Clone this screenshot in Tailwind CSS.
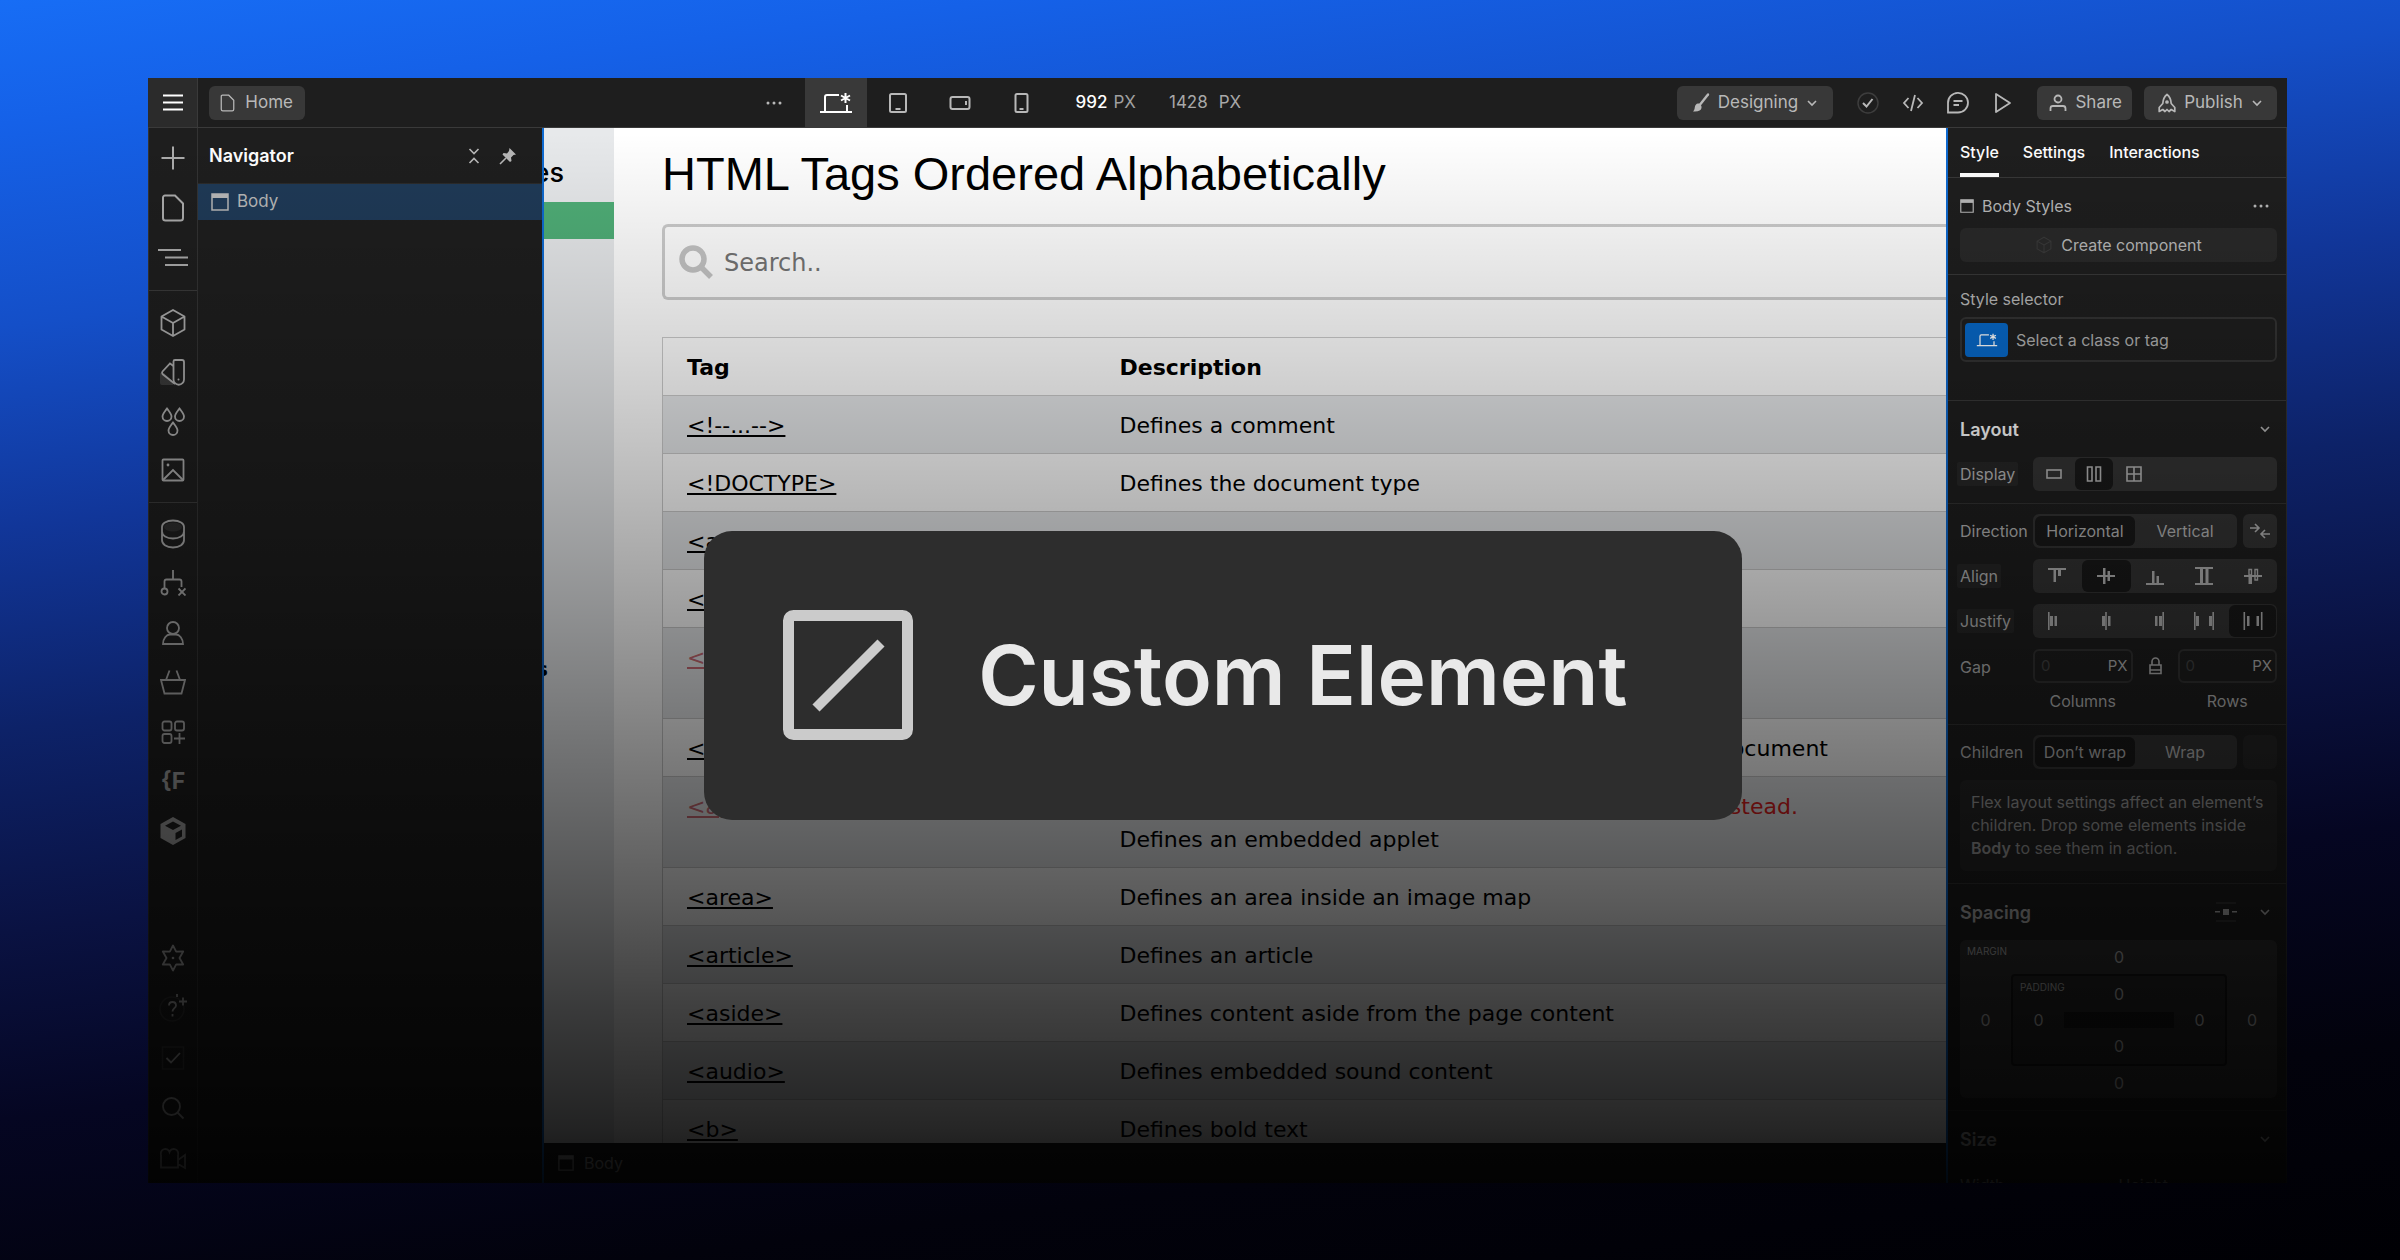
<!DOCTYPE html>
<html lang="en">
<head>
  <meta charset="utf-8">
  <title>Custom Element</title>
  <meta name="viewport" content="width=device-width, initial-scale=1">
  <script src="https://cdn.jsdelivr.net/npm/@tailwindcss/browser@4"></script>
</head>

<body class="bg-[#000004]">
  <!-- shared icons -->
  <svg class="hidden">
    <symbol id="i-page" viewBox="0 0 24 28"><path d="M4 1.500h10l8 8V24a2.500 2.500 0 0 1-2.500 2.500h-15A2.500 2.500 0 0 1 2 24V3.500a2 2 0 0 1 2-2z" fill="none" stroke="currentColor" stroke-width="2"/></symbol>
    <symbol id="i-body" viewBox="0 0 18 18"><path d="M1 1h16v16H1z" fill="none" stroke="currentColor" stroke-width="1.500"/><path d="M1 1h16v4H1z" fill="currentColor"/></symbol>
    <symbol id="i-chevron" viewBox="0 0 12 12"><path d="M2 4l4 4 4-4" fill="none" stroke="currentColor" stroke-width="1.600"/></symbol>
    <symbol id="i-laptop" viewBox="0 0 34 22"><path d="M1 20h32M6 20V5a2 2 0 0 1 2-2h12M28 13v7" fill="none" stroke="currentColor" stroke-width="2"/><path d="M26.500 1v10M22 3.500l9 5M31 3.500l-9 5" fill="none" stroke="currentColor" stroke-width="2"/></symbol>
    <symbol id="i-cube" viewBox="0 0 28 30"><path d="M14 2l11.500 6.500v13L14 28 2.500 21.500v-13zM2.500 8.500L14 15l11.500-6.500M14 15v13" fill="none" stroke="currentColor" stroke-width="1.800" stroke-linejoin="round"/></symbol>
    <symbol id="i-dots" viewBox="0 0 16 4"><circle cx="2" cy="2" r="1.500" fill="currentColor"/><circle cx="8" cy="2" r="1.500" fill="currentColor"/><circle cx="14" cy="2" r="1.500" fill="currentColor"/></symbol>
  </svg>

  <div class="flex h-screen pt-[78px] pb-[77px] pl-[148px] pr-[113px] bg-[linear-gradient(173deg,#176df5_0%,#1561e8_8%,#144fc8_21%,#113699_34%,#0d2268_47%,#0a1242_60%,#050622_72%,#02020c_86%,#000004_100%)] font-['Inter',sans-serif] text-[#b8b8b8]">
    <div class="relative flex flex-1 min-w-0 flex-col overflow-hidden bg-[#1e1e1e]">

      <header class="flex h-[50px] shrink-0 items-stretch border-b border-[#3a3a3a] text-[17px]">
        <button aria-label="Menu" class="flex w-[50px] items-center justify-center border-r border-[#3a3a3a] bg-[#2b2b2b] text-white">
          <svg class="h-5 w-[22px]" viewBox="0 0 22 20"><path d="M1 2.500h20M1 9.500h20M1 16.500h20" stroke="currentColor" stroke-width="2"/></svg>
        </button>
        <div class="flex flex-[34] items-center pl-[11px]">
          <button class="flex h-[34px] w-24 items-center justify-end gap-[10px] rounded-md bg-[#383838] pr-3">
            <svg class="h-5 w-[15px]"><use href="#i-page"/></svg>
            Home
          </button>
        </div>
        <div class="flex items-stretch">
          <button aria-label="More" class="flex w-[62px] items-center justify-center"><svg class="h-1 w-4"><use href="#i-dots"/></svg></button>
          <button aria-label="Desktop" class="flex w-[62px] items-center justify-center bg-[#393939] text-white"><svg class="h-[22px] w-[34px]"><use href="#i-laptop"/></svg></button>
          <button aria-label="Tablet" class="flex w-[62px] items-center justify-center">
            <svg class="h-[22px] w-[18px]" viewBox="0 0 18 22" fill="none" stroke="currentColor" stroke-width="2"><rect x="1" y="2" width="16" height="18" rx="1.500"/><path d="M6.500 17h5"/></svg>
          </button>
          <button aria-label="Phone landscape" class="flex w-[62px] items-center justify-center">
            <svg class="h-4 w-[22px]" viewBox="0 0 22 16" fill="none" stroke="currentColor" stroke-width="2"><rect x="1.500" y="2" width="19" height="12" rx="2"/><path d="M17 6v4"/></svg>
          </button>
          <button aria-label="Phone" class="flex w-[62px] items-center justify-center">
            <svg class="h-[22px] w-[15px]" viewBox="0 0 15 22" fill="none" stroke="currentColor" stroke-width="2"><rect x="1.500" y="2" width="12" height="18" rx="1.500"/><path d="M5.500 17h4"/></svg>
          </button>
          <p class="flex items-center gap-[6px] pl-[23px] text-[#a0a0a0]"><span class="font-medium text-white">992</span>PX</p>
          <p class="flex items-center gap-[11px] pl-[33px] text-[#a8a8a8]"><span>1428</span>PX</p>
        </div>
        <div class="flex flex-[66] items-center justify-end pr-[10px]">
          <button class="flex h-[34px] w-[156px] items-center justify-center gap-2 rounded-md bg-[#383838]">
            <svg class="h-[22px] w-[18px]" viewBox="0 0 18 22"><path d="M16 2.500L8.500 12" stroke="currentColor" stroke-width="2.400" stroke-linecap="round"/><path d="M6 11.500c2 0 4 2 3.500 4.500-.5 2.500-3 4-8.500 3.500 1.500-1 1.500-2.500 1.800-4.200.3-2 1.500-3.800 3.200-3.800z" fill="currentColor"/></svg>
            Designing
            <svg class="h-3 w-3"><use href="#i-chevron"/></svg>
          </button>
          <div class="mx-3 flex">
            <button aria-label="Status" class="flex w-[45px] justify-center">
              <svg class="size-6" viewBox="0 0 24 24" fill="none"><circle cx="12" cy="12" r="10" stroke="#3d3d3d" stroke-width="1.500"/><path d="M7 12l3.500 3.500L16.500 8" stroke="currentColor" stroke-width="2"/></svg>
            </button>
            <button aria-label="Code" class="flex w-[45px] justify-center">
              <svg class="size-6" viewBox="0 0 24 24" fill="none" stroke="currentColor" stroke-width="1.800"><path d="M7.500 7l-4.500 5 4.500 5M16.500 7l4.500 5-4.500 5M14 4l-4 16"/></svg>
            </button>
            <button aria-label="Comments" class="flex w-[45px] justify-center">
              <svg class="size-6" viewBox="0 0 24 24" fill="none" stroke="currentColor" stroke-width="1.800"><path d="M2 21.500V12A10 9.800 0 1 1 12 21.500zM7.500 10h9M7.500 14h5.500"/></svg>
            </button>
            <button aria-label="Preview" class="flex w-[45px] justify-center">
              <svg class="size-6" viewBox="0 0 24 24" fill="none" stroke="currentColor" stroke-width="1.800"><path d="M5 3v18l14-9z" stroke-linejoin="round"/></svg>
            </button>
          </div>
          <button class="mr-3 flex h-[34px] w-[95px] items-center justify-end gap-2 rounded-md bg-[#383838] pr-[10px]">
            <svg class="h-5 w-[18px]" viewBox="0 0 18 20" fill="none" stroke="currentColor" stroke-width="1.800"><circle cx="9" cy="6" r="3.500"/><path d="M1.500 18v-2.500a2.500 2.500 0 0 1 2.500-2.500h10a2.500 2.500 0 0 1 2.500 2.500V18"/></svg>
            Share
          </button>
          <button class="flex h-[34px] w-[133px] items-center justify-center gap-2 rounded-md bg-[#383838]">
            <svg class="h-5 w-[18px]" viewBox="0 0 18 20" fill="none" stroke="currentColor" stroke-width="1.700" stroke-linejoin="round"><path d="M9 1.500C6.500 3.500 5 6.500 4.800 10.500L1.200 14.500v4l3.600-2 2.200 2 2-2 2 2 2.200-2 3.600 2v-4l-3.600-4C13 6.500 11.500 3.500 9 1.500z"/><circle cx="9" cy="9" r="1" fill="currentColor"/></svg>
            Publish
            <svg class="h-3 w-3"><use href="#i-chevron"/></svg>
          </button>
        </div>
      </header>

      <div class="flex min-h-0 flex-1">
        <!-- tool rail -->
        <nav class="flex w-[50px] shrink-0 flex-col border-x border-[#333] text-[#acacac]">
          <div class="flex flex-col border-b border-[#3a3a3a] pt-[5px] pb-[7px]">
            <button aria-label="Add" class="flex h-[50px] items-center justify-center"><svg class="size-6" viewBox="0 0 24 24"><path d="M12 .500v23M.500 12h23" stroke="currentColor" stroke-width="2"/></svg></button>
            <button aria-label="Pages" class="flex h-[50px] items-center justify-center"><svg class="h-[28px] w-6"><use href="#i-page"/></svg></button>
            <button aria-label="Navigator" class="flex h-[50px] items-center justify-center"><svg class="h-5 w-[30px]" viewBox="0 0 30 20"><path d="M0 2h23M7 9.500h23M7 17h23" stroke="currentColor" stroke-width="2"/></svg></button>
          </div>
          <div class="flex flex-col border-b border-[#3a3a3a] pt-[7px] pb-2">
            <button aria-label="Components" class="flex h-[49px] items-center justify-center"><svg class="h-[30px] w-[28px]"><use href="#i-cube"/></svg></button>
            <button aria-label="Variables" class="flex h-[49px] items-center justify-center">
              <svg class="h-[28px] w-[26px]" viewBox="0 0 26 28" fill="none" stroke="currentColor" stroke-width="1.800"><path d="M0 15h4l9 9v3H2a2 2 0 0 1-2-2z" fill="#3a3a3a" stroke="none"/><path d="M15 2h7a2 2 0 0 1 2 2v17.500a5.200 5.200 0 0 1-10.500 0V3.500A1.500 1.500 0 0 1 15 2z"/><path d="M13.500 8L10 5.500 2.500 13.500a2 2 0 0 0 0 2.500l12.500 10"/><circle cx="18.500" cy="21.500" r="1" fill="currentColor" stroke="none"/></svg>
            </button>
            <button aria-label="Styles" class="flex h-[49px] items-center justify-center">
              <svg class="h-[30px] w-[26px]" viewBox="0 0 26 30" fill="none" stroke="currentColor" stroke-width="1.800"><path d="M7 2.500C4.500 6 2.500 8 2.500 10.500a4.500 4.500 0 0 0 9 0C11.500 8 9.500 6 7 2.500zM19.500 2.500C17 6 15 8 15 10.500a4.500 4.500 0 0 0 9 0c0-2.500-2-4.500-4.500-8zM13 16.500c-2.500 3.500-4.500 5.500-4.500 8a4.500 4.500 0 0 0 9 0c0-2.500-2-4.500-4.500-8z"/></svg>
            </button>
            <button aria-label="Assets" class="flex h-[49px] items-center justify-center">
              <svg class="size-6" viewBox="0 0 24 24" fill="none" stroke="currentColor" stroke-width="1.800"><rect x="1.500" y="1.500" width="21" height="21" rx="1"/><path d="M2 22l10-10 10 10"/><circle cx="7" cy="7" r="1.400" fill="currentColor" stroke="none"/></svg>
            </button>
          </div>
          <div class="grid h-[353px] auto-rows-fr pt-[6px]">
            <button aria-label="CMS" class="flex items-center justify-center">
              <svg class="h-[30px] w-6" viewBox="0 0 24 30" fill="none" stroke="currentColor" stroke-width="1.800"><ellipse cx="12" cy="8" rx="9" ry="4.500" fill="#303030" stroke="none"/><path d="M1 8c0-3.500 4-6.500 11-6.500S23 4.500 23 8v13c0 4-4 7.500-11 7.500S1 25 1 21zM1 12.500c0 4 4.500 7 11 7s11-3 11-7"/></svg>
            </button>
            <button aria-label="Logic" class="flex items-center justify-center">
              <svg class="h-[26px] w-[26px]" viewBox="0 0 26 26" fill="none" stroke="currentColor" stroke-width="1.800"><path d="M13 0v9.500M4.500 18v-6.500a2 2 0 0 1 2-2h13a2 2 0 0 1 2 2V17M18.500 18.500l7 7M25.500 18.500l-7 7"/><circle cx="4.500" cy="21.500" r="3"/></svg>
            </button>
            <button aria-label="Users" class="flex items-center justify-center">
              <svg class="h-[26px] w-6" viewBox="0 0 24 26" fill="none" stroke="currentColor" stroke-width="1.800"><circle cx="12" cy="8" r="6"/><path d="M2 24c0-5.500 3.500-9.500 7-9.500h6c3.500 0 7 4 7 9.500z"/></svg>
            </button>
            <button aria-label="Ecommerce" class="flex items-center justify-center">
              <svg class="h-[26px] w-[26px]" viewBox="0 0 26 26" fill="none" stroke="currentColor" stroke-width="1.800"><path d="M1 11h24l-3.500 13.500h-17zM6 11l3.500-9.500M20 11l-3.500-9.500"/></svg>
            </button>
            <button aria-label="Apps" class="flex items-center justify-center">
              <svg class="size-6" viewBox="0 0 24 24" fill="none" stroke="currentColor" stroke-width="1.800"><rect x="1.500" y="1.500" width="9" height="9" rx="2"/><rect x="14" y="1.500" width="9" height="9" rx="2"/><rect x="1.500" y="14" width="9" height="9" rx="2"/><path d="M18.500 13v11M13 18.500h11"/></svg>
            </button>
            <button aria-label="Finsweet" class="flex items-center justify-center text-[23px] font-bold text-[#a0a0a0]">{F</button>
            <button aria-label="Box app" class="flex items-center justify-center text-[#a0a0a0]">
              <svg class="h-[30px] w-[26px]" viewBox="0 0 26 30"><path d="M13 1l12.500 7v14L13 29 .500 22V8z" fill="currentColor"/><path d="M13 5.500l8 4.300-8 4.200-8-4.200zM15.500 17l6.500-3.500v7L15.500 24z" fill="#1e1e1e"/></svg>
            </button>
          </div>
          <div class="mt-auto flex flex-col">
            <button aria-label="Settings" class="flex h-[50px] items-center justify-center">
              <svg class="h-[28px] w-6" viewBox="0 0 24 28" fill="none" stroke="currentColor" stroke-width="1.800" stroke-linejoin="round"><path d="M12 1.500l3.200 6.200 7-.200-3.700 6.500 3.700 6.500-7-.200L12 26.500l-3.200-6.200-7 .200L5.500 14 1.800 7.500l7 .200z"/><circle cx="12" cy="14" r="1.300" fill="currentColor" stroke="none"/></svg>
            </button>
            <button aria-label="Help" class="flex h-[50px] items-center justify-center">
              <svg class="h-[28px] w-[28px]" viewBox="0 0 28 28" fill="none" stroke="currentColor" stroke-width="1.800"><circle cx="13" cy="15" r="12" stroke="#333" stroke-width="1.500"/><path d="M10 11.500c0-2 1.500-3.500 3.500-3.500s3.500 1.500 3.500 3.500c0 2.500-3.500 3-3.500 6M13.500 20v2.500M20 7.500h8M24 3.500v8M18 0v3"/></svg>
            </button>
            <button aria-label="Audit" class="flex h-[50px] items-center justify-center">
              <svg class="size-6" viewBox="0 0 24 24" fill="none"><rect x="1.500" y="1" width="21" height="22" stroke="#3a3a3a" stroke-width="1.500"/><path d="M5.500 12l4.500 4.500L19 7" stroke="currentColor" stroke-width="1.800"/></svg>
            </button>
            <button aria-label="Search" class="flex h-[50px] items-center justify-center">
              <svg class="size-6" viewBox="0 0 24 24" fill="none" stroke="currentColor" stroke-width="1.800"><circle cx="10.500" cy="10.500" r="8.500"/><path d="M16.500 16.500l6 6"/></svg>
            </button>
            <button aria-label="Tutorials" class="flex h-[50px] items-center justify-center">
              <svg class="h-6 w-[28px]" viewBox="0 0 28 24" fill="none" stroke="currentColor" stroke-width="1.800"><path d="M2 9v12.500h17V9M19 14l7-5v13l-7-4M2 9a3.800 3.800 0 1 1 8.500-3 3.800 3.800 0 1 1 8.500 3"/></svg>
            </button>
          </div>
        </nav>

        <!-- navigator -->
        <section class="flex w-[346px] shrink-0 flex-col border-r-2 border-[#0f6ad0]">
          <div class="flex h-14 items-center border-b border-[#2b2b2b] pl-[11px] pr-[25px]">
            <h2 class="flex-1 text-[18px] font-semibold text-white">Navigator</h2>
            <button aria-label="Collapse all" class="mr-[19px]"><svg class="h-4 w-3" viewBox="0 0 12 16" fill="none" stroke="currentColor" stroke-width="1.600"><path d="M1.500 1L6 5.500 10.500 1M1.500 15L6 10.500 10.500 15"/></svg></button>
            <button aria-label="Pin"><svg class="h-[18px] w-[18px]" viewBox="0 0 18 18"><path d="M10.500 1l6.500 6.500-2.500.500-2.500 2.500.500 3.500-1.500 1L3.500 7.500l1-1.500 3.500.500L10 4z" fill="currentColor"/><path d="M7 11l-6 6" stroke="currentColor" stroke-width="1.600"/></svg></button>
          </div>
          <button class="flex h-9 items-center gap-2 bg-[#1f3a57] pl-[13px] text-[17px]">
            <svg class="size-[18px]"><use href="#i-body"/></svg>
            Body
          </button>
        </section>

        <!-- page being edited -->
        <div class="flex min-w-0 flex-1 flex-col">
          <main class="flex min-h-0 flex-1 overflow-hidden bg-white font-['Verdana','DejaVu_Sans',sans-serif] text-[22px] text-black">
            <aside class="w-[70px] shrink-0 bg-[#e7e9eb]">
              <p class="flex h-[74px] w-5 items-center justify-end overflow-hidden pt-4 font-['Inter',sans-serif] text-[27px] font-medium">References</p>
              <div class="h-[37px] bg-[#4fae77]"></div>
              <p class="mt-[415px] flex w-1 justify-end overflow-hidden text-[20px] font-bold">Tags</p>
            </aside>
            <div class="min-w-0 flex-1 pl-12">
              <h1 class="whitespace-nowrap pt-4 font-['Liberation_Sans',sans-serif] text-[47px] leading-[60px]">HTML Tags Ordered Alphabetically</h1>
              <label class="mt-5 flex h-[76px] items-center gap-[11px] rounded-l-md border-[3px] border-r-0 border-[#ccc] pl-[14px]">
                <svg class="h-[34px] w-[34px]" viewBox="0 0 34 34" fill="none" stroke="#c4c4c4" stroke-width="5.500"><circle cx="14" cy="14" r="11"/><path d="M22 22l10 10"/></svg>
                <input type="text" aria-label="Search tags" placeholder="Search.." class="flex-1 pt-[2px] text-[24px] outline-none placeholder:text-[#757575]">
              </label>
              <table class="mt-[37px] w-full border-collapse border-l border-t border-[#ccc] text-left leading-[33px]">
                <thead>
                  <tr class="border-b border-[#ccc]"><th class="w-[433px] pt-[13px] pb-[11px] pl-6">Tag</th><th class="pt-[13px] pb-[11px] pl-6">Description</th></tr>
                </thead>
                <tbody class="align-top whitespace-nowrap">
                  <tr class="border-b border-[#ccc] bg-[#e7e9eb]"><td class="pt-[13px] pb-[11px] pl-6"><a href="#" class="underline">&lt;!--...--&gt;</a></td><td class="pt-[13px] pb-[11px] pl-6">Defines a comment</td></tr>
                  <tr class="border-b border-[#ccc]"><td class="pt-[13px] pb-[11px] pl-6"><a href="#" class="underline">&lt;!DOCTYPE&gt;</a></td><td class="pt-[13px] pb-[11px] pl-6">Defines the document type</td></tr>
                  <tr class="border-b border-[#ccc] bg-[#e7e9eb]"><td class="pt-[13px] pb-[11px] pl-6"><a href="#" class="underline">&lt;a&gt;</a></td><td class="pt-[13px] pb-[11px] pl-6">Defines a hyperlink</td></tr>
                  <tr class="border-b border-[#ccc]"><td class="pt-[13px] pb-[11px] pl-6"><a href="#" class="underline">&lt;abbr&gt;</a></td><td class="pt-[13px] pb-[11px] pl-6">Defines an abbreviation or an acronym</td></tr>
                  <tr class="border-b border-[#ccc] bg-[#e7e9eb]"><td class="pt-[13px] pb-[11px] pl-6"><a href="#" class="text-[#c96a74] underline">&lt;acronym&gt;</a></td><td class="pt-[13px] pb-[11px] pl-6"><span class="text-[#e02020]">Not supported in HTML5. Use &lt;abbr&gt; instead.</span><br>Defines an acronym</td></tr>
                  <tr class="border-b border-[#ccc]"><td class="pt-[13px] pb-[11px] pl-6"><a href="#" class="underline">&lt;address&gt;</a></td><td class="pt-[13px] pb-[11px] pl-6">Defines contact information for the author/owner of a document</td></tr>
                  <tr class="border-b border-[#ccc] bg-[#e7e9eb]"><td class="pt-[13px] pb-[11px] pl-6"><a href="#" class="text-[#c96a74] underline">&lt;applet&gt;</a></td><td class="pt-[13px] pb-[11px] pl-6"><span class="text-[#e02020]">Not supported in HTML5. Use &lt;embed&gt; or &lt;object&gt; instead.</span><br>Defines an embedded applet</td></tr>
                  <tr class="border-b border-[#ccc]"><td class="pt-[13px] pb-[11px] pl-6"><a href="#" class="underline">&lt;area&gt;</a></td><td class="pt-[13px] pb-[11px] pl-6">Defines an area inside an image map</td></tr>
                  <tr class="border-b border-[#ccc] bg-[#e7e9eb]"><td class="pt-[13px] pb-[11px] pl-6"><a href="#" class="underline">&lt;article&gt;</a></td><td class="pt-[13px] pb-[11px] pl-6">Defines an article</td></tr>
                  <tr class="border-b border-[#ccc]"><td class="pt-[13px] pb-[11px] pl-6"><a href="#" class="underline">&lt;aside&gt;</a></td><td class="pt-[13px] pb-[11px] pl-6">Defines content aside from the page content</td></tr>
                  <tr class="border-b border-[#ccc] bg-[#e7e9eb]"><td class="pt-[13px] pb-[11px] pl-6"><a href="#" class="underline">&lt;audio&gt;</a></td><td class="pt-[13px] pb-[11px] pl-6">Defines embedded sound content</td></tr>
                  <tr><td class="pt-[13px] pb-[11px] pl-6"><a href="#" class="underline">&lt;b&gt;</a></td><td class="pt-[13px] pb-[11px] pl-6">Defines bold text</td></tr>
                </tbody>
              </table>
            </div>
          </main>
          <footer class="flex h-10 shrink-0 items-center gap-[10px] pl-[14px] text-[16px]">
            <svg class="size-4"><use href="#i-body"/></svg>
            Body
          </footer>
        </div>

        <!-- style panel -->
        <aside class="flex w-[341px] shrink-0 flex-col border-l-2 border-r border-l-[#0f6ad0] border-r-[#333] text-[16px]">
          <div class="flex h-[50px] shrink-0 gap-6 border-b border-[#383838] pl-3 font-medium text-white">
            <button class="border-b-4 border-white pt-[2px]">Style</button>
            <button class="border-b-4 border-transparent pt-[2px]">Settings</button>
            <button class="border-b-4 border-transparent pt-[2px]">Interactions</button>
          </div>
          <div class="shrink-0 border-b border-[#383838] pr-[9px] pb-3 pl-3">
            <div class="flex h-[50px] items-center gap-2 pt-[5px]">
              <svg class="size-[14px]"><use href="#i-body"/></svg>
              <span class="flex-1">Body Styles</span>
              <button aria-label="More" class="mr-2"><svg class="h-1 w-4"><use href="#i-dots"/></svg></button>
            </div>
            <button class="flex h-[34px] w-full items-center justify-center gap-2 rounded-md bg-[#292929]">
              <svg class="h-[18px] w-[18px] text-[#3a3a3a]"><use href="#i-cube"/></svg>
              Create component
            </button>
          </div>
          <div class="h-[126px] shrink-0 border-b border-[#383838] pt-[13px] pr-[9px] pl-3">
            <label for="selector" class="block leading-[22px]">Style selector</label>
            <div class="mt-[7px] flex h-[45px] items-center gap-2 rounded-md border-2 border-[#333] pl-[3px]">
              <button aria-label="Breakpoint" class="flex h-[34px] w-[43px] items-center justify-center rounded-sm bg-[#0768c8] text-white"><svg class="h-[14px] w-[22px]"><use href="#i-laptop"/></svg></button>
              <input id="selector" type="text" placeholder="Select a class or tag" class="min-w-0 flex-1 outline-none placeholder:text-[#b0b0b0]">
            </div>
          </div>

          <div class="shrink-0 border-b border-[#333] pr-[9px] pb-3 pl-3">
            <div class="flex h-14 items-center pr-[6px]">
              <h3 class="flex-1 text-[18px] font-semibold text-white">Layout</h3>
              <svg class="h-3 w-3"><use href="#i-chevron"/></svg>
            </div>
            <div class="flex h-[34px] items-center">
              <span class="w-[73px]"><span class="-ml-[3px] rounded-xs bg-[#272727] px-[3px] py-[2px]">Display</span></span>
              <div class="flex h-full flex-1 rounded-md bg-[#343434]">
                <button aria-label="Block" class="flex w-[42px] items-center justify-center"><svg class="h-4 w-4" viewBox="0 0 16 16"><rect x="1" y="4" width="14" height="8" fill="none" stroke="currentColor" stroke-width="1.600"/></svg></button>
                <button aria-label="Flex" class="my-px flex w-[38px] items-center justify-center rounded-md bg-[#191919]"><svg class="h-4 w-4" viewBox="0 0 16 16" fill="none" stroke="currentColor" stroke-width="1.600"><path d="M1.500 1h4.500v14H1.500zM10 1h4.500v14H10z"/></svg></button>
                <button aria-label="Grid" class="flex w-[42px] items-center justify-center"><svg class="h-4 w-4" viewBox="0 0 16 16" fill="none" stroke="currentColor" stroke-width="1.600"><path d="M1 1h14v14H1zM8 1v14M1 8h14"/></svg></button>
              </div>
            </div>
          </div>

          <div class="flex shrink-0 flex-col gap-[11px] border-b border-[#333] pt-[10px] pr-[9px] pb-3 pl-3">
            <div class="flex h-[34px] items-center">
              <span class="w-[73px] shrink-0">Direction</span>
              <div class="flex h-full flex-1 rounded-md border-2 border-[#343434] bg-[#343434]">
                <button class="flex-1 rounded-md bg-[#191919]">Horizontal</button>
                <button class="flex-1">Vertical</button>
              </div>
              <button aria-label="Reverse" class="ml-[6px] flex size-[34px] items-center justify-center rounded-md bg-[#343434]"><svg class="h-4 w-[22px]" viewBox="0 0 22 16" fill="none" stroke="currentColor" stroke-width="1.600"><path d="M1 5h8M6 1l4 4-4 4M21 11h-8M16 7l-4 4 4 4"/></svg></button>
            </div>
            <div class="flex h-[34px] items-center">
              <span class="w-[73px] shrink-0"><span class="-ml-[3px] rounded-xs bg-[#272727] px-[3px] py-[2px]">Align</span></span>
              <div class="grid h-full flex-1 grid-cols-5 rounded-md bg-[#343434]">
                <button aria-label="Start" class="flex items-center justify-center"><svg class="size-5" viewBox="0 0 20 20" fill="currentColor"><path d="M1 2h18v2H1zM6.500 4H9v12H6.500zM11 4h3v6h-3z"/></svg></button>
                <button aria-label="Center" class="my-px flex items-center justify-center rounded-md bg-[#191919]"><svg class="size-5" viewBox="0 0 20 20" fill="currentColor"><path d="M1 9h18v2H1zM7 2h2.500v16H7zM11.500 5H14v10h-2.500z"/></svg></button>
                <button aria-label="End" class="flex items-center justify-center"><svg class="size-5" viewBox="0 0 20 20" fill="currentColor"><path d="M1 17h18v2H1zM7 5h2.500v12H7zM11.500 10H14v7h-2.500z"/></svg></button>
                <button aria-label="Stretch" class="flex items-center justify-center"><svg class="size-5" viewBox="0 0 20 20" fill="currentColor"><path d="M1 1h18v2H1zM1 17h18v2H1zM6 3h3v14H6zM11.500 3h3v14h-3z"/></svg></button>
                <button aria-label="Baseline" class="flex items-center justify-center"><svg class="size-5" viewBox="0 0 20 20" fill="currentColor"><path d="M1 9h18v2H1zM5.500 9H9v9H5.500z"/><path d="M6 3.500h2.500V9H6zM12 3.500h2.500V14H12z" fill="none" stroke="currentColor" stroke-width="1.400"/></svg></button>
              </div>
            </div>
            <div class="flex h-[34px] items-center">
              <span class="w-[73px] shrink-0"><span class="-ml-[3px] rounded-xs bg-[#272727] px-[3px] py-[2px]">Justify</span></span>
              <div class="grid h-full flex-1 grid-cols-5 rounded-md bg-[#343434]">
                <button aria-label="Start" class="flex items-center justify-center"><svg class="size-5" viewBox="0 0 20 20" fill="currentColor"><path d="M1 1h1.600v18H1zM3 5h3v10H3zM7.500 5H10v10H7.500z"/></svg></button>
                <button aria-label="Center" class="flex items-center justify-center"><svg class="size-5" viewBox="0 0 20 20" fill="currentColor"><path d="M9.200 1h1.600v18H9.200zM6 5h3v10H6zM12 5h2.500v10H12z"/></svg></button>
                <button aria-label="End" class="flex items-center justify-center"><svg class="size-5" viewBox="0 0 20 20" fill="currentColor"><path d="M17.400 1H19v18h-1.600zM14 5h3v10h-3zM10 5h2.500v10H10z"/></svg></button>
                <button aria-label="Space between" class="flex items-center justify-center"><svg class="size-5" viewBox="0 0 20 20" fill="currentColor"><path d="M0 1h1.600v18H0zM2 5h3v10H2zM18.400 1H20v18h-1.600zM15 5h3v10h-3z"/></svg></button>
                <button aria-label="Space around" class="m-px flex items-center justify-center rounded-md bg-[#191919]"><svg class="size-5" viewBox="0 0 20 20" fill="currentColor"><path d="M.500 1h1.600v18H.500zM4 5h2.500v10H4zM17.900 1h1.600v18h-1.600zM13.500 5H16v10h-2.500z"/></svg></button>
              </div>
            </div>
            <div class="flex items-start">
              <span class="w-[73px] shrink-0 leading-[36px]">Gap</span>
              <label class="flex flex-1 flex-col text-center">
                <span class="flex h-[34px] items-center rounded-md border-2 border-[#333] pr-[3px] pl-[6px] text-[15px]"><input type="text" value="0" class="w-0 min-w-0 flex-1 text-[#444] outline-none">PX</span>
                <span class="pt-[7px] leading-[22px]">Columns</span>
              </label>
              <svg class="mx-4 mt-[7px] h-5 w-[13px]" viewBox="0 0 13 20" fill="none" stroke="currentColor" stroke-width="1.600"><path d="M1 9h11v8.500H1zM3 9V5.500a3.500 3.500 0 0 1 7 0V9M1 14h11"/></svg>
              <label class="flex flex-1 flex-col text-center">
                <span class="flex h-[34px] items-center rounded-md border-2 border-[#333] pr-[3px] pl-[6px] text-[15px]"><input type="text" value="0" class="w-0 min-w-0 flex-1 text-[#444] outline-none">PX</span>
                <span class="pt-[7px] leading-[22px]">Rows</span>
              </label>
            </div>
          </div>

          <div class="flex shrink-0 flex-col gap-[11px] border-b border-[#333] pt-[10px] pr-[9px] pb-3 pl-3">
            <div class="flex h-[34px] items-center">
              <span class="w-[73px] shrink-0">Children</span>
              <div class="flex h-full flex-1 rounded-md border-2 border-[#343434] bg-[#343434]">
                <button class="flex-1 rounded-md bg-[#191919]">Don’t wrap</button>
                <button class="flex-1">Wrap</button>
              </div>
              <button aria-label="Reverse wrap" class="ml-[6px] size-[34px] rounded-md bg-[#262626]"></button>
            </div>
            <p class="rounded-md bg-[#262626] px-[11px] py-[11px] leading-[23px] text-[#a0a0a0]">Flex layout settings affect an element’s children. Drop some elements inside <b class="font-semibold">Body</b> to see them in action.</p>
          </div>

          <div class="shrink-0 border-b border-[#2c2c2c] pr-[9px] pb-3 pl-3">
            <div class="flex h-14 items-center pr-[6px]">
              <h3 class="flex-1 text-[18px] font-semibold">Spacing</h3>
              <svg class="mr-[22px] h-5 w-[22px]" viewBox="0 0 22 20" fill="currentColor"><path d="M8 7h6v6H8zM0 9h5v1.600H0zM17 9h5v1.600h-5z"/><path d="M1 1h20M1 19h20" stroke="#3a3a3a" stroke-width="1.500"/></svg>
              <svg class="h-3 w-3"><use href="#i-chevron"/></svg>
            </div>
            <div class="relative grid h-[158px] grid-cols-[51px_1fr_50px] grid-rows-[34px_1fr_34px] place-items-center rounded-md bg-[#303030] leading-none">
              <span class="absolute top-[6px] left-[7px] text-[10px]">MARGIN</span>
              <button class="col-start-2">0</button>
              <button class="col-start-1 row-start-2">0</button>
              <div class="relative row-start-2 grid h-full w-full grid-cols-[51px_1fr_51px] grid-rows-[36px_1fr_36px] place-items-center rounded-sm border-2 border-[#141414] bg-[#272727]">
                <span class="absolute top-[6px] left-[7px] text-[10px]">PADDING</span>
                <button class="col-start-2">0</button>
                <button class="col-start-1 row-start-2">0</button>
                <div class="row-start-2 h-full w-full bg-[#161616]"></div>
                <button class="col-start-3 row-start-2">0</button>
                <button class="col-start-2 row-start-3">0</button>
              </div>
              <button class="col-start-3 row-start-2">0</button>
              <button class="col-start-2 row-start-3">0</button>
            </div>
          </div>

          <div class="min-h-0 flex-1 overflow-hidden pr-[9px] pl-3">
            <div class="flex h-14 items-center pr-[6px]">
              <h3 class="flex-1 text-[18px] font-semibold">Size</h3>
              <svg class="h-3 w-3"><use href="#i-chevron"/></svg>
            </div>
            <div class="grid grid-cols-2 pt-2 leading-5"><span>Width</span><span>Height</span></div>
          </div>
        </aside>
      </div>

      <!-- fade to black -->
      <div class="pointer-events-none absolute inset-0 bg-[linear-gradient(180deg,transparent_5%,rgb(0_0_0/.16)_25%,rgb(0_0_0/.27)_37%,rgb(0_0_0/.37)_47%,rgb(0_0_0/.5)_60%,rgb(0_0_0/.64)_74%,rgb(0_0_0/.75)_84%,rgb(0_0_0/.85)_95%,rgb(0_0_0/.92)_100%)]"></div>

      <div class="absolute top-[41%] left-[26%] flex items-center gap-16 rounded-[28px] bg-[#2d2d2d] py-[79px] pr-[115px] pl-[79px]">
        <svg class="size-[131px]" viewBox="0 0 131 131"><rect x="5.500" y="5.500" width="119" height="119" rx="5" fill="none" stroke="#cbcbcb" stroke-width="11"/><path d="M33 98L98 33" stroke="#cbcbcb" stroke-width="10"/></svg>
        <p class="whitespace-nowrap text-[82px] leading-[131px] -my-px font-semibold text-[#e9e9e9]">Custom Element</p>
      </div>
    </div>
  </div>
</body>
</html>
